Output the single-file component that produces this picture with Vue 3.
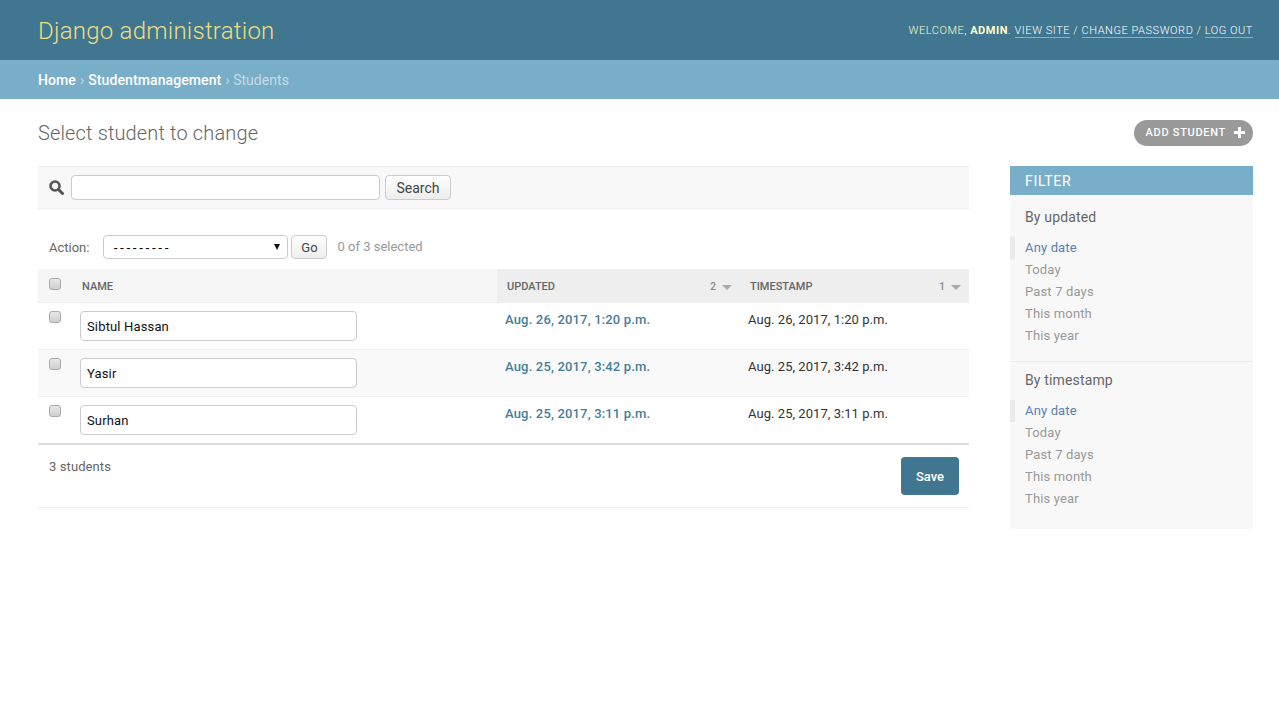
<template>
  <div class="admin">
    <header class="header">
      <h1 class="branding">Django administration</h1>
      <div class="user-tools">
        WELCOME, <strong>ADMIN</strong>.
        <a href="#">VIEW SITE</a> / <a href="#">CHANGE PASSWORD</a> / <a href="#">LOG OUT</a>
      </div>
    </header>
    <div class="breadcrumbs">
      <a href="#">Home</a> › <a href="#">Studentmanagement</a> › Students
    </div>

    <main class="content">
      <div class="title-row">
        <h2>Select student to change</h2>
        <a class="addlink" href="#">
          ADD STUDENT
          <svg width="11" height="11" viewBox="0 0 12 12"><path d="M4.4 0h3.2v4.4H12v3.2H7.6V12H4.4V7.6H0V4.4h4.4z" fill="#fff" /></svg>
        </a>
      </div>

      <div class="columns">
        <div class="changelist">
          <div class="toolbar">
            <svg class="search-icon" width="15" height="15" viewBox="0 0 15 15">
              <circle cx="6" cy="6" r="4.5" fill="none" stroke="#555" stroke-width="2.6" />
              <path d="M9.6 9.6l3.9 3.9" stroke="#555" stroke-width="3" stroke-linecap="round" />
            </svg>
            <input class="search-input" type="text" />
            <button class="btn search-btn">Search</button>
          </div>

          <div class="actions">
            <label>Action:</label>
            <div class="fake-select">
              <span>---------</span>
              <span class="select-arrow"></span>
            </div>
            <button class="btn go-btn">Go</button>
            <span class="counter">0 of 3 selected</span>
          </div>

          <table class="results">
            <thead>
              <tr>
                <th class="col-check"><span class="checkbox"></span></th>
                <th class="col-name">NAME</th>
                <th class="col-updated sorted">
                  <div class="th-inner">UPDATED <span class="sort">2<i></i></span></div>
                </th>
                <th class="col-stamp sorted">
                  <div class="th-inner">TIMESTAMP <span class="sort">1<i></i></span></div>
                </th>
              </tr>
            </thead>
            <tbody>
              <tr v-for="s in students" :key="s.name">
                <td class="col-check"><span class="checkbox"></span></td>
                <td class="col-name"><input class="name-input" type="text" :value="s.name" /></td>
                <td class="col-updated"><a href="#">{{ s.date }}</a></td>
                <td class="col-stamp">{{ s.date }}</td>
              </tr>
            </tbody>
          </table>

          <div class="paginator">
            <span class="count">3 students</span>
            <button class="save">Save</button>
          </div>
        </div>

        <aside class="filter">
          <h2>FILTER</h2>
          <section v-for="g in filters" :key="g" class="filter-group">
            <h3>{{ g }}</h3>
            <ul>
              <li v-for="(o, i) in options" :key="o" :class="{ selected: i === 0 }">{{ o }}</li>
            </ul>
          </section>
        </aside>
      </div>
    </main>
  </div>
</template>

<script setup>
const students = [
  { name: 'Sibtul Hassan', date: 'Aug. 26, 2017, 1:20 p.m.' },
  { name: 'Yasir', date: 'Aug. 25, 2017, 3:42 p.m.' },
  { name: 'Surhan', date: 'Aug. 25, 2017, 3:11 p.m.' }
]
const filters = ['By updated', 'By timestamp']
const options = ['Any date', 'Today', 'Past 7 days', 'This month', 'This year']
</script>

<style>
html, body {
  margin: 0;
  background: #fff;
}
</style>

<style scoped>
.admin {
  min-height: 705px;
  font-family: Roboto, "Liberation Sans", sans-serif;
  font-size: 13px;
  color: #333;
}

.header {
  height: 60px;
  box-sizing: border-box;
  padding: 0 26px 0 38px;
  display: flex;
  align-items: center;
  justify-content: space-between;
  background: #417690;
  color: #ffc;
}

.branding {
  margin: 2px 0 0;
  font-size: 24px;
  font-weight: 300;
  letter-spacing: 0.24px;
  color: #ecdf80;
}

.user-tools {
  font-size: 11px;
  letter-spacing: 0.55px;
  font-weight: 300;
}

.user-tools strong {
  font-weight: 700;
}

.user-tools a {
  color: #fff;
  font-weight: 300;
  text-decoration: none;
  border-bottom: 1px solid rgba(255, 255, 255, 0.4);
}

.breadcrumbs {
  height: 39px;
  box-sizing: border-box;
  padding: 0 38px;
  display: flex;
  align-items: center;
  gap: 4px;
  background: #79aec8;
  color: #c4dce8;
  font-size: 14px;
  letter-spacing: 0.04px;
}

.breadcrumbs a {
  color: #fff;
  font-weight: 500;
  letter-spacing: 0.1px;
  text-decoration: none;
}

.content {
  padding: 0 26px 0 38px;
}

.title-row {
  height: 67px;
  display: flex;
  align-items: center;
  justify-content: space-between;
}

.title-row h2 {
  margin: 0;
  font-size: 20px;
  font-weight: 300;
  letter-spacing: 0.14px;
  color: #666;
}

.addlink {
  height: 26px;
  box-sizing: border-box;
  padding: 0 8px 0 12px;
  display: flex;
  align-items: center;
  gap: 8px;
  border-radius: 13px;
  background: #999;
  color: #fff;
  font-size: 11px;
  font-weight: 500;
  letter-spacing: 0.7px;
  text-decoration: none;
}

.columns {
  display: flex;
  justify-content: space-between;
  align-items: flex-start;
}

.changelist {
  width: 931px;
}

.toolbar {
  height: 43px;
  box-sizing: border-box;
  padding: 0 11px;
  display: flex;
  align-items: center;
  background: #f8f8f8;
  border-top: 1px solid #eee;
  border-bottom: 1px solid #eee;
}

.search-icon {
  margin-right: 7px;
}

.search-input {
  width: 309px;
  height: 25px;
  box-sizing: border-box;
  border: 1px solid #ccc;
  border-radius: 4px;
  background: #fff;
}

.btn {
  box-sizing: border-box;
  border: 1px solid #ccc;
  border-radius: 4px;
  background: linear-gradient(#fff, #ededed);
  color: #444;
  font-family: inherit;
  padding: 0;
}

.search-btn {
  width: 66px;
  height: 25px;
  margin-left: 5px;
  font-size: 14px;
}

.actions {
  height: 24px;
  margin-top: 26px;
  margin-bottom: 10px;
  padding-left: 11px;
  display: flex;
  align-items: center;
  color: #666;
}

.fake-select {
  width: 185px;
  height: 24px;
  box-sizing: border-box;
  margin-left: 14px;
  padding: 0 7px 0 9px;
  display: flex;
  align-items: center;
  justify-content: space-between;
  border: 1px solid #ccc;
  border-radius: 4px;
  background: #fff;
  color: #000;
  font-family: "Liberation Sans", Arial, sans-serif;
  letter-spacing: 2.05px;
}

.select-arrow {
  width: 0;
  height: 0;
  border-left: 3.5px solid transparent;
  border-right: 3.5px solid transparent;
  border-top: 6px solid #111;
}

.go-btn {
  width: 36px;
  height: 24px;
  margin-left: 3px;
  font-size: 13px;
}

.counter {
  margin-left: 10px;
  margin-top: -2px;
  color: #999;
}

.results {
  width: 100%;
  border-collapse: collapse;
  table-layout: fixed;
}

.results th {
  height: 33px;
  box-sizing: border-box;
  padding: 2px 0 0;
  text-align: left;
  background: #f6f6f6;
  border-bottom: 1px solid #eee;
  color: #666;
  font-size: 11px;
  font-weight: 500;
}

.results th.sorted {
  background: #eee;
}

.results td {
  height: 47px;
  box-sizing: border-box;
  padding: 0;
  vertical-align: top;
  border-bottom: 1px solid #eee;
}

.results tbody tr:nth-child(2) td {
  background: #f9f9f9;
}

.results tbody tr:last-child td {
  height: 48px;
  border-bottom: 2px solid #ddd;
}

.col-check {
  width: 34px;
  padding-left: 11px !important;
}

.col-name {
  width: 425px;
}

th.col-name {
  padding-left: 10px !important;
}

td.col-name {
  padding: 8px 0 0 8px !important;
}

.col-updated {
  width: 243px;
}

.checkbox {
  display: block;
  width: 12px;
  height: 12px;
  box-sizing: border-box;
  border: 1px solid #aaa;
  border-radius: 3px;
  background: linear-gradient(#e8e8e8, #cfcfcf);
}

th .checkbox {
  margin-top: -4px;
}

td .checkbox {
  margin-top: 8px;
}

.name-input {
  width: 277px;
  height: 30px;
  box-sizing: border-box;
  padding: 2px 6px 0;
  border: 1px solid #ccc;
  border-radius: 4px;
  background: #fff;
  color: #111;
  font-family: inherit;
  font-size: 13px;
  letter-spacing: 0.15px;
}

.th-inner {
  display: flex;
  justify-content: space-between;
  align-items: center;
  padding: 0 8px 0 10px;
}

.sort {
  display: flex;
  align-items: center;
  gap: 6px;
  font-size: 10px;
  color: #888;
}

.sort i {
  width: 0;
  height: 0;
  margin-top: 2px;
  border-left: 5px solid transparent;
  border-right: 5px solid transparent;
  border-top: 5px solid #aaa;
}

td.col-updated {
  padding: 9px 0 0 8px !important;
  line-height: 16px;
}

td.col-updated a {
  color: #447e9b;
  font-weight: 500;
  letter-spacing: 0.17px;
  text-decoration: none;
}

td.col-stamp {
  padding: 9px 0 0 8px !important;
  line-height: 16px;
  letter-spacing: 0.05px;
  color: #333;
}

.paginator {
  height: 63px;
  box-sizing: border-box;
  padding: 12px 10px 0 11px;
  display: flex;
  justify-content: space-between;
  align-items: flex-start;
  border-bottom: 1px solid #eee;
  color: #666;
}

.count {
  margin-top: 2px;
  letter-spacing: 0.1px;
}

.save {
  width: 58px;
  height: 38px;
  border: 0;
  border-radius: 4px;
  background: #417690;
  color: #fff;
  font-family: inherit;
  font-size: 13px;
  font-weight: 500;
}

.filter {
  width: 243px;
  background: #f8f8f8;
}

.filter h2 {
  height: 29px;
  box-sizing: border-box;
  margin: 0;
  padding: 0 15px;
  display: flex;
  align-items: center;
  background: #79aec8;
  color: #fff;
  font-size: 14px;
  font-weight: 400;
  letter-spacing: 0.7px;
}

.filter-group {
  padding-bottom: 14px;
  border-bottom: 1px solid #eaeaea;
}

.filter-group:last-child {
  border-bottom: 0;
  padding-bottom: 19px;
}

.filter h3 {
  margin: 0;
  padding: 13px 15px 11px;
  font-size: 14px;
  line-height: 18px;
  font-weight: 400;
  letter-spacing: 0.15px;
  color: #666;
}

.filter-group:last-child h3 {
  padding-top: 9px;
}

.filter ul {
  margin: 0;
  padding: 0;
  list-style: none;
}

.filter li {
  height: 22px;
  line-height: 22px;
  padding-left: 15px;
  letter-spacing: 0.15px;
  color: #999;
}

.filter li.selected {
  padding-left: 10px;
  border-left: 5px solid #eaeaea;
  color: #5b80b2;
}
</style>
